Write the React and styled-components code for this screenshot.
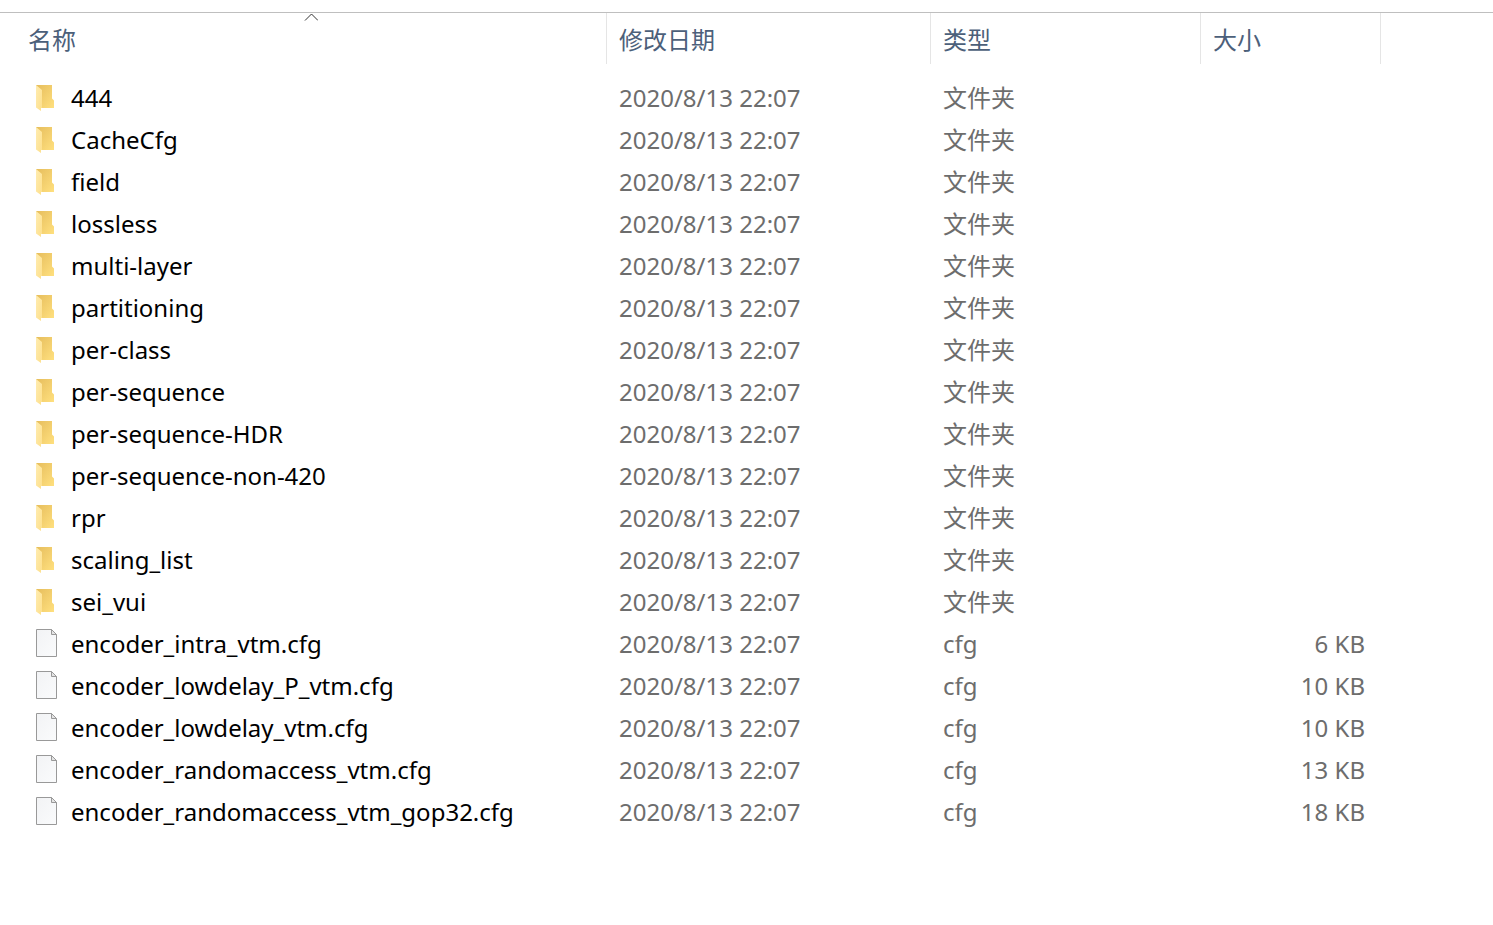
import React, { useState } from "react";
import styled, { createGlobalStyle } from "styled-components";

const GlobalStyle = createGlobalStyle`
  body {
    margin: 0;
    background: #fff;
    font-family: "Noto Sans", "Noto Sans CJK SC", sans-serif;
  }
`;

const Explorer = styled.main`
  margin-top: 12px;
  padding-left: 16px;
  border-top: 1px solid #bfbfbf;
`;

const FileTable = styled.table`
  width: 100%;
  table-layout: fixed;
  border-collapse: separate;
  border-spacing: 0;
`;

const Col = styled.col`
  width: ${(props) => (props.$width ? `${props.$width}px` : "auto")};
`;

const HeadCell = styled.th`
  position: relative;
  height: 51px;
  padding: 0;
  border-right: ${(props) => (props.$last ? "none" : "1px solid #e5e5e5")};
  text-align: left;
`;

const HeadButton = styled.button`
  display: block;
  width: 100%;
  height: 51px;
  padding: 0 12px;
  border: none;
  background: none;
  color: #4c607a;
  font-family: "Noto Sans CJK SC", sans-serif;
  font-size: 24px;
  font-weight: 400;
  line-height: 36px;
  text-align: left;
`;

const SortArrow = styled.svg`
  position: absolute;
  top: 0;
  left: 50%;
  width: 14px;
  height: 8px;
  margin-left: -7px;
`;

const FileRows = styled.tbody`
  &::before {
    content: "";
    display: table-row;
    height: 13px;
  }
`;

const Cell = styled.td`
  height: 42px;
  padding: 0 ${(props) => (props.$right ? 16 : 12)}px 0 12px;
  color: #6d6d6d;
  font-size: 24px;
  line-height: 42px;
  text-align: ${(props) => (props.$right ? "right" : "left")};
  white-space: nowrap;
`;

const FileName = styled.div`
  display: flex;
  align-items: center;
  height: 42px;
  padding-left: 7px;
  color: #000;
`;

const Icon = styled.svg`
  flex: none;
  width: 24px;
  height: 28px;
  margin: 0 12px 2px 0;
`;

const FolderIcon = () => (
  <Icon viewBox="0 0 24 28" aria-hidden="true">
    <defs>
      <linearGradient id="folder-back" x1="0" y1="0" x2="1" y2="1">
        <stop offset="0" stopColor="#e6bd5c" />
        <stop offset="1" stopColor="#ffe07f" />
      </linearGradient>
      <linearGradient id="folder-front" x1="0" y1="0" x2="1" y2="1">
        <stop offset="0" stopColor="#ffecb0" />
        <stop offset="1" stopColor="#fddf8b" />
      </linearGradient>
    </defs>
    <path d="M1 2H17V15.5L19 17.5V25H6Z" fill="url(#folder-back)" />
    <path d="M1 2L7 7V25H6V28L1 24.5Z" fill="url(#folder-front)" />
  </Icon>
);

const DocumentIcon = () => (
  <Icon viewBox="0 0 24 28" aria-hidden="true">
    <defs>
      <linearGradient id="document-page" x1="0" y1="0" x2="1" y2="1">
        <stop offset="0" stopColor="#f2f3f5" />
        <stop offset="1" stopColor="#fafbfc" />
      </linearGradient>
    </defs>
    <path
      d="M1.5 .5H16.5L21.5 5.5V27.5H1.5Z"
      fill="url(#document-page)"
      stroke="#999"
    />
    <path d="M16.5 .5V5.5H21.5Z" fill="#e4e4e4" stroke="#999" />
  </Icon>
);

const columns = [
  { key: "name", label: "名称", width: 591 },
  { key: "date", label: "修改日期", width: 324 },
  { key: "type", label: "类型", width: 270 },
  { key: "size", label: "大小", width: 180 },
];

const folders = [
  "444",
  "CacheCfg",
  "field",
  "lossless",
  "multi-layer",
  "partitioning",
  "per-class",
  "per-sequence",
  "per-sequence-HDR",
  "per-sequence-non-420",
  "rpr",
  "scaling_list",
  "sei_vui",
].map((name) => ({
  name,
  date: "2020/8/13 22:07",
  type: "文件夹",
  folder: true,
}));

const files = [
  ["encoder_intra_vtm.cfg", "6 KB"],
  ["encoder_lowdelay_P_vtm.cfg", "10 KB"],
  ["encoder_lowdelay_vtm.cfg", "10 KB"],
  ["encoder_randomaccess_vtm.cfg", "13 KB"],
  ["encoder_randomaccess_vtm_gop32.cfg", "18 KB"],
].map(([name, size]) => ({
  name,
  size,
  date: "2020/8/13 22:07",
  type: "cfg",
}));

const FileRow = ({ file }) => {
  const { name, date, type, size, folder } = file;

  return (
    <tr>
      <Cell>
        <FileName>
          {folder ? <FolderIcon /> : <DocumentIcon />}
          {name}
        </FileName>
      </Cell>
      <Cell>{date}</Cell>
      <Cell>{type}</Cell>
      <Cell $right>{size}</Cell>
      <Cell />
    </tr>
  );
};

const App = () => {
  const [sortKey, setSortKey] = useState("name");

  return (
    <>
      <GlobalStyle />
      <Explorer>
        <FileTable>
          <colgroup>
            {columns.map(({ key, width }) => (
              <Col key={key} $width={width} />
            ))}
            <Col />
          </colgroup>
          <thead>
            <tr>
              {columns.map(({ key, label }) => (
                <HeadCell key={key} scope="col">
                  <HeadButton type="button" onClick={() => setSortKey(key)}>
                    {label}
                  </HeadButton>
                  {sortKey === key && (
                    <SortArrow viewBox="0 0 14 8" aria-hidden="true">
                      <path d="M1 7.5L7.5 1L14 7.5" fill="none" stroke="#333" />
                    </SortArrow>
                  )}
                </HeadCell>
              ))}
              <HeadCell as="td" $last />
            </tr>
          </thead>
          <FileRows>
            {[...folders, ...files].map((file) => (
              <FileRow key={file.name} file={file} />
            ))}
          </FileRows>
        </FileTable>
      </Explorer>
    </>
  );
};

export default App;
